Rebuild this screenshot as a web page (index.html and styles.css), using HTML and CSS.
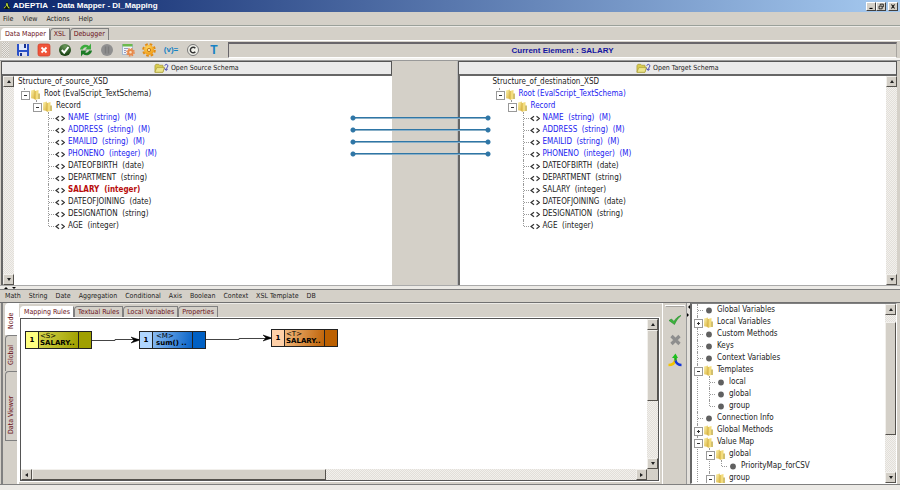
FILE: index.html
```html
<!DOCTYPE html>
<html lang="en">
<head>
    <meta charset="UTF-8">
    <meta name="viewport" content="width=device-width, initial-scale=1.0">
    <title>ADEPTIA - Data Mapper - DI_Mapping</title>
    <link rel="stylesheet" href="styles.css">
</head>
<body>
    <!-- shared icons -->
    <svg class="defs" aria-hidden="true">
        <defs>
            <linearGradient id="gold" x1="0" y1="0" x2="1" y2="1">
                <stop offset="0" stop-color="#fdf3b0"/><stop offset="1" stop-color="#d9b440"/>
            </linearGradient>
            <radialGradient id="sun" cx="40%" cy="30%" r="70%">
                <stop offset="0" stop-color="#ffd75e"/><stop offset="1" stop-color="#f09a14"/>
            </radialGradient>
            <radialGradient id="moss" cx="50%" cy="20%" r="80%">
                <stop offset="0" stop-color="#6c9a5c"/><stop offset="1" stop-color="#123a0c"/>
            </radialGradient>
        </defs>
        <symbol id="folder" viewBox="0 0 11 11">
            <path d="M1 1.500 5 .5v9.500l-4-.8z" fill="url(#gold)"/>
            <path d="M5 2 8.500 1v9L5 10.800z" fill="#f3dc7c"/>
            <path d="M4.700 2h.8v8.700h-.8z" fill="#cfa93a"/>
            <path d="M8 4.500h2V10H8z" fill="#d2c070"/>
        </symbol>
        <symbol id="tag" viewBox="0 0 11 11">
            <path d="M5 3.200 2 5.500l3 2.300M7.500 3.200l3 2.300-3 2.300" fill="none" stroke="#333" stroke-width="1.200"/>
        </symbol>
        <symbol id="dot" viewBox="0 0 11 11">
            <circle cx="6" cy="5.500" r="2.900" fill="#606060"/>
        </symbol>
        <symbol id="open" viewBox="0 0 16 11">
            <path d="M1 2.500 2 1h3l1 1h3.500v2H11L9.500 9.500H1z" fill="#d9cc50" stroke="#a3952d" stroke-width=".7"/>
            <path d="m1 9.500 2-5h8l-1.500 5z" fill="#ece58c" stroke="#a3952d" stroke-width=".6"/>
            <path d="M11.500 2.500C12 .5 15 .7 14.700 3c-.2 1.500-2 2-2 4M11.200 5.500l1.500 2 2-1.500" fill="none" stroke="#3535a8"/>
        </symbol>
    </svg>

    <header class="titlebar">
        <svg class="logo" viewBox="0 0 9 9"><path d="M4 0h1l3 7 1 1H0l3-3z" fill="#0c1608"/><path d="M3.500 1.500 5 1l1 4 2 2H6L4 4 2 7H.5l3-3z" fill="#b8d63c"/></svg>
        <h1>ADEPTIA &nbsp;- Data Mapper - DI_Mapping</h1>
        <div class="window-btns">
            <button aria-label="Minimize"><svg viewBox="0 0 10 9"><path d="M3 7h4" stroke="#000" stroke-width="1.500"/></svg></button>
            <button aria-label="Restore"><svg viewBox="0 0 10 9"><path d="M4 3V1.500h4V5H7M2.500 4h4v3.500h-4z" fill="none" stroke="#000"/></svg></button>
            <button class="close" aria-label="Close"><svg viewBox="0 0 10 9"><path d="m3 2 4 5M7 2 3 7" stroke="#000" stroke-width="1.300"/></svg></button>
        </div>
    </header>

    <nav class="menu main-menu">
        <button>File</button>
        <button>View</button>
        <button>Actions</button>
        <button>Help</button>
    </nav>

    <div class="tabs">
        <button class="tab active">Data Mapper</button>
        <button class="tab">XSL</button>
        <button class="tab">Debugger</button>
    </div>

    <div class="toolbar">
        <span class="grip"></span>
        <button aria-label="Save"><svg viewBox="0 0 14 14"><path d="M1 1h12v12H2l-1-1z" fill="#2a50c8"/><path d="M3 1h8v6H3z" fill="#dfe9fa"/><path d="M8 1h2v4H8z" fill="#1a3390"/><path d="M3 9h8v4H3z" fill="#dde"/><path d="M4 10h2v3H4z" fill="#1a3390"/></svg></button>
        <button aria-label="Close mapping"><svg viewBox="0 0 14 14"><rect x="1" y="1" width="12" height="12" rx="2" fill="#f0553a" stroke="#d03a26" stroke-width=".7"/><path d="m4.500 4.500 5 5m0-5-5 5" stroke="#fff" stroke-width="1.800"/></svg></button>
        <button aria-label="Validate"><svg viewBox="0 0 14 14"><circle cx="7" cy="7" r="6" fill="url(#moss)"/><path d="m3.800 7 2.400 2.700L10.500 4" fill="none" stroke="#fff" stroke-width="2"/></svg></button>
        <button aria-label="Refresh"><svg viewBox="0 0 14 14"><path d="M1 6.500C1.500 2 7 .5 10 3l2-2.500V6.500H6L8 4.700C6.500 3.800 4.500 4.500 4 6.500z" fill="#3bab3c"/><path d="M13 7.500C12.500 12 7 13.500 4 11l-2 2.500V7.500h6L6 9.300c1.500.9 3.500.2 4-1.800z" fill="#1c7a25"/></svg></button>
        <button aria-label="Stop"><svg viewBox="0 0 14 14"><circle cx="7" cy="7" r="6" fill="#8f8f8f"/><path d="M5.500 3.500v7M8.500 3.500v7" stroke="#7c7c7c" stroke-width="1.500"/></svg></button>
        <button aria-label="Form settings"><svg viewBox="0 0 14 14"><path d="M1.500 1.500h10v10h-10z" fill="#eef3fa" stroke="#8aa6c8" stroke-width=".7"/><path d="M1.500 1h10v2.500h-10z" fill="#6cba4c"/><path d="M3 5.500h4M3 7.500h2M3 9.500h2" stroke="#99b"/><circle cx="9.500" cy="9.300" r="2.300" fill="#f7dfc0" stroke="#e8894a" stroke-width="2"/><circle cx="9.500" cy="9.300" r="3.700" fill="none" stroke="#e8894a" stroke-width="1.300" stroke-dasharray="1.600 1.300"/></svg></button>
        <button aria-label="Settings"><svg viewBox="0 0 14 14"><circle cx="7" cy="7" r="5.800" fill="none" stroke="#e28a10" stroke-width="2" stroke-dasharray="2.600 1.950"/><circle cx="7" cy="7" r="5" fill="url(#sun)"/><circle cx="7" cy="7" r="1.700" fill="#f7e0a0" stroke="#b8660a" stroke-width=".8"/></svg></button>
        <button class="glyph vars">(v)=</button>
        <button aria-label="Constant"><svg viewBox="0 0 14 14"><circle cx="7" cy="7" r="5.500" fill="#f1f1ea" stroke="#777"/><path d="M9.300 5.200a2.800 2.800 0 1 0 0 3.600" fill="none" stroke="#333" stroke-width="1.500"/></svg></button>
        <button class="glyph text-tool">T</button>
        <output class="current">Current Element : SALARY</output>
    </div>

    <main class="mapper">
        <section class="pane source">
            <button class="open-schema"><svg><use href="#open"/></svg>Open Source Schema</button>
            <div class="pane-body">
                <div class="vscroll"><button class="up" aria-label="Scroll up"></button><button class="down" aria-label="Scroll down"></button></div>
                <div class="tree-box">
                    <p class="tree-title">Structure_of_source_XSD</p>
                    <ul class="tree">
                        <li><span class="row open"><svg><use href="#folder"/></svg>Root (EvalScript_TextSchema)</span>
                            <ul>
                                <li><span class="row open"><svg><use href="#folder"/></svg>Record</span>
                                    <ul>
                                        <li><span class="row mapped"><svg><use href="#tag"/></svg>NAME &nbsp;(string) &nbsp;(M)</span></li>
                                        <li><span class="row mapped"><svg><use href="#tag"/></svg>ADDRESS &nbsp;(string) &nbsp;(M)</span></li>
                                        <li><span class="row mapped"><svg><use href="#tag"/></svg>EMAILID &nbsp;(string) &nbsp;(M)</span></li>
                                        <li><span class="row mapped"><svg><use href="#tag"/></svg>PHONENO &nbsp;(integer) &nbsp;(M)</span></li>
                                        <li><span class="row"><svg><use href="#tag"/></svg>DATEOFBIRTH &nbsp;(date)</span></li>
                                        <li><span class="row"><svg><use href="#tag"/></svg>DEPARTMENT &nbsp;(string)</span></li>
                                        <li><span class="row used"><svg><use href="#tag"/></svg>SALARY &nbsp;(integer)</span></li>
                                        <li><span class="row"><svg><use href="#tag"/></svg>DATEOFJOINING &nbsp;(date)</span></li>
                                        <li><span class="row"><svg><use href="#tag"/></svg>DESIGNATION &nbsp;(string)</span></li>
                                        <li><span class="row"><svg><use href="#tag"/></svg>AGE &nbsp;(integer)</span></li>
                                    </ul>
                                </li>
                            </ul>
                        </li>
                    </ul>
                </div>
            </div>
        </section>

        <div class="links">
            <ul>
                <li></li>
                <li></li>
                <li></li>
                <li></li>
            </ul>
        </div>

        <section class="pane target">
            <button class="open-schema"><svg><use href="#open"/></svg>Open Target Schema</button>
            <div class="pane-body">
                <div class="tree-box">
                    <p class="tree-title">Structure_of_destination_XSD</p>
                    <ul class="tree">
                        <li><span class="row open mapped"><svg><use href="#folder"/></svg>Root (EvalScript_TextSchema)</span>
                            <ul>
                                <li><span class="row open mapped"><svg><use href="#folder"/></svg>Record</span>
                                    <ul>
                                        <li><span class="row mapped"><svg><use href="#tag"/></svg>NAME &nbsp;(string) &nbsp;(M)</span></li>
                                        <li><span class="row mapped"><svg><use href="#tag"/></svg>ADDRESS &nbsp;(string) &nbsp;(M)</span></li>
                                        <li><span class="row mapped"><svg><use href="#tag"/></svg>EMAILID &nbsp;(string) &nbsp;(M)</span></li>
                                        <li><span class="row mapped"><svg><use href="#tag"/></svg>PHONENO &nbsp;(integer) &nbsp;(M)</span></li>
                                        <li><span class="row"><svg><use href="#tag"/></svg>DATEOFBIRTH &nbsp;(date)</span></li>
                                        <li><span class="row"><svg><use href="#tag"/></svg>DEPARTMENT &nbsp;(string)</span></li>
                                        <li><span class="row"><svg><use href="#tag"/></svg>SALARY &nbsp;(integer)</span></li>
                                        <li><span class="row"><svg><use href="#tag"/></svg>DATEOFJOINING &nbsp;(date)</span></li>
                                        <li><span class="row"><svg><use href="#tag"/></svg>DESIGNATION &nbsp;(string)</span></li>
                                        <li><span class="row"><svg><use href="#tag"/></svg>AGE &nbsp;(integer)</span></li>
                                    </ul>
                                </li>
                            </ul>
                        </li>
                    </ul>
                </div>
                <div class="vscroll"><button class="up" aria-label="Scroll up"></button><button class="down" aria-label="Scroll down"></button></div>
            </div>
        </section>
    </main>

    <div class="splitter"><i class="tri-up"></i><i class="tri-down"></i></div>

    <nav class="menu fn-menu">
        <button>Math</button>
        <button>String</button>
        <button>Date</button>
        <button>Aggregation</button>
        <button>Conditional</button>
        <button>Axis</button>
        <button>Boolean</button>
        <button>Context</button>
        <button>XSL Template</button>
        <button>DB</button>
    </nav>

    <div class="rules">
        <div class="side-tabs">
            <button class="active">Node</button>
            <button>Global</button>
            <button class="viewer">Data Viewer</button>
        </div>

        <div class="editor">
            <div class="tabs">
                <button class="tab active">Mapping Rules</button>
                <button class="tab">Textual Rules</button>
                <button class="tab">Local Variables</button>
                <button class="tab">Properties</button>
            </div>
            <div class="canvas-frame">
                <div class="canvas">
                    <svg class="wires" aria-hidden="true">
                        <path d="M71 21.500h23v-1h24M185 20.500h33v-1h32" fill="none" stroke="#444"/>
                        <path d="M110 18l9 3-9 3 3-3zM242 16l9 3-9 3 3-3z" fill="#000" stroke="#000" stroke-width=".5"/>
                    </svg>
                    <div class="node src"><b>1</b><span><small>&lt;S&gt;</small>SALARY..</span><i></i></div>
                    <div class="node method"><b>1</b><span><small>&lt;M&gt;</small>sum() ..</span><i></i></div>
                    <div class="node dst"><b>1</b><span><small>&lt;T&gt;</small>SALARY..</span><i></i></div>
                </div>
                <div class="vscroll"><button class="up" aria-label="Scroll up"></button><div class="thumb canvas-thumb"></div><button class="down" aria-label="Scroll down"></button></div>
                <div class="hscroll"><button class="left" aria-label="Scroll left"></button><div class="thumb"></div><button class="right" aria-label="Scroll right"></button></div>
            </div>
        </div>

        <div class="actions">
            <hr>
            <button aria-label="Apply"><svg viewBox="0 0 14 14"><path d="M1 7.500 3.500 6 6 8.500C8 5 10 3.500 13 2.500 10 5 8 8 6.500 11.500z" fill="#3cb53c" stroke="#238a2a" stroke-width=".6"/></svg></button>
            <button aria-label="Delete"><svg viewBox="0 0 14 14"><path d="m3.500 3 8 8m0-8-8 8" stroke="#8e8e8e" stroke-width="3.200"/></svg></button>
            <button aria-label="Branch"><svg viewBox="0 0 14 14"><path d="M7.500 4.500V9" stroke="#18a818" stroke-width="2.500"/><path d="m4 5 3.500-4.500L10 5z" fill="#1ec01e"/><path d="M7 7.500C6.500 10.500 4 12 .5 12" fill="none" stroke="#f3c400" stroke-width="2.500"/><path d="M7.500 7.500C8 10 10.500 12 13.500 12" fill="none" stroke="#1536d8" stroke-width="2.500"/></svg></button>
        </div>

        <div class="divider"><i class="tri-left"></i><i class="tri-right"></i></div>

        <div class="explorer">
            <ul class="tree">
                <li><span class="row"><svg><use href="#dot"/></svg>Global Variables</span></li>
                <li><span class="row shut"><svg><use href="#folder"/></svg>Local Variables</span></li>
                <li><span class="row"><svg><use href="#dot"/></svg>Custom Methods</span></li>
                <li><span class="row"><svg><use href="#dot"/></svg>Keys</span></li>
                <li><span class="row"><svg><use href="#dot"/></svg>Context Variables</span></li>
                <li><span class="row open"><svg><use href="#folder"/></svg>Templates</span>
                    <ul>
                        <li><span class="row"><svg><use href="#dot"/></svg>local</span></li>
                        <li><span class="row"><svg><use href="#dot"/></svg>global</span></li>
                        <li><span class="row"><svg><use href="#dot"/></svg>group</span></li>
                    </ul>
                </li>
                <li><span class="row"><svg><use href="#dot"/></svg>Connection Info</span></li>
                <li><span class="row shut"><svg><use href="#folder"/></svg>Global Methods</span></li>
                <li class="more"><span class="row open"><svg><use href="#folder"/></svg>Value Map</span>
                    <ul>
                        <li><span class="row open"><svg><use href="#folder"/></svg>global</span>
                            <ul>
                                <li><span class="row"><svg><use href="#dot"/></svg>PriorityMap_forCSV</span></li>
                            </ul>
                        </li>
                        <li><span class="row open"><svg><use href="#folder"/></svg>group</span></li>
                    </ul>
                </li>
            </ul>
            <div class="vscroll"><button class="up" aria-label="Scroll up"></button><div class="thumb explorer-thumb"></div><button class="down" aria-label="Scroll down"></button></div>
        </div>
    </div>

    <footer class="status"></footer>
</body>
</html>
```
FILE: styles.css
```css
*{margin:0;
padding:0;
box-sizing: border-box;}
body{
    display: flex;
    flex-direction: column;
    height: 100vh;
    overflow: hidden;
    background-color: #d4d0c8;
    color: #222;
    font-family: "DejaVu Sans Condensed", "DejaVu Sans", sans-serif;
    font-size: 7px;
    line-height: 12px;
}
button{border: none;background: none;color: inherit;font: inherit;white-space: nowrap;}
ul{list-style: none;}
svg{display: block;}
.defs{position: absolute;width: 0;height: 0;}

/* title bar */
.titlebar{
    display: flex;
    align-items: center;
    height: 12px;
    padding: 0 2px 0 3px;
    background: linear-gradient(to right, #0a246a, #a6caf0);
    color: #fff;
}
.titlebar h1{flex: 1;font-family: "Liberation Sans", sans-serif;font-size: 8px;line-height: 12px;}
.logo{width: 8px;height: 8px;margin-right: 2px;}
.window-btns{display: flex;}
.window-btns button{
    width: 10px;
    height: 9px;
    background-color: #d4d0c8;
    border: 1px solid;
    border-color: #fff #404040 #404040 #fff;
}
.window-btns svg{width: 8px;height: 7px;}
.window-btns .close{margin-left: 2px;}

/* menus */
.menu{display: flex;}
.main-menu{gap: 9px;height: 14px;padding: 0 3px;border-bottom: 1px solid #9aa09a;}
.fn-menu{gap: 8px;height: 14px;padding: 0 5px;border-top: 1px solid #808080;border-bottom: 1px solid #707070;}

/* tabs */
.tabs{display: flex;align-items: flex-end;height: 14px;padding-left: 1px;border-top: 1px solid #eceae6;}
.tab{
    height: 12px;
    padding: 0 3px;
    border: 1px solid #808080;
    border-bottom: none;
    border-top-left-radius: 4px;
    color: #6b1018;
    line-height: 11px;
}
.tab.active{background-color: #fff;border-color: #fff #808080 #fff #fff;}

/* toolbar */
.toolbar{
    display: flex;
    align-items: center;
    gap: 7px;
    height: 20px;
    padding: 0 3px 0 2px;
    border-top: 1px solid #fff;
    border-bottom: 2px solid #f4f3f0;
}
.toolbar button, .toolbar button svg{width: 14px;height: 14px;}
.grip{width: 7px;height: 15px;background: repeating-conic-gradient(#c0bdb6 0 25%, #ece9e4 0 50%) 0 0 / 2px 2px;}
.toolbar .glyph{color: #1682c4;font-family: "Liberation Sans", sans-serif;font-weight: bold;}
.toolbar .vars{width: 16px;font-size: 8px;}
.toolbar .text-tool{font-size: 12px;}
.current{
    flex: 1;
    height: 16px;
    border: 1px solid;
    border-top-width: 2px;
    border-color: #68656a #a8a5a0 #fff #68656a;
    color: #1414a0;
    font-family: "Liberation Sans", sans-serif;
    font-size: 8px;
    font-weight: bold;
    line-height: 13px;
    text-align: center;
}

/* schemas */
.mapper{
    flex: 224;
    min-height: 0;
    display: grid;
    grid-template-columns: 391fr 66px 440fr;
    border-top: 1px solid #999;
    padding: 0 3px 0 1px;
}
.pane{display: flex;flex-direction: column;min-width: 0;min-height: 0;}
.open-schema{
    display: flex;
    align-items: center;
    justify-content: center;
    gap: 2px;
    height: 15px;
    background-color: #eaeaea;
    border: 1px solid #555;
    border-bottom: 2px solid #666;
}
.open-schema svg{width: 15px;height: 11px;}
.pane-body{flex: 1;display: flex;min-height: 0;background-color: #fff;border-left: 2px solid #666;}
.tree-box{flex: 1;padding-left: 4px;font-size: 8px;}
.target .tree-box{padding-left: 33px;}
.tree-title{height: 12px;}

/* scroll bars */
.vscroll, .hscroll{
    display: flex;
    justify-content: space-between;
    background: repeating-conic-gradient(#e2dfd9 0 25%, #f2f0ed 0 50%) 0 0 / 2px 2px;
}
.vscroll{flex-direction: column;width: 11px;}
.hscroll{height: 11px;}
.vscroll button, .hscroll button, .thumb{
    display: flex;
    align-items: center;
    justify-content: center;
    width: 11px;
    height: 11px;
    background-color: #d4d0c8;
    border: 1px solid;
    border-color: #f2f0ec #55524d #55524d #f2f0ec;
}
.vscroll button::after, .hscroll button::after{content: "";border: 2px solid transparent;}
.up::after{border-top: none !important;border-bottom: 3px solid #222 !important;}
.down::after{border-bottom: none !important;border-top: 3px solid #222 !important;}
.left::after{border-left: none !important;border-right: 3px solid #222 !important;}
.right::after{border-right: none !important;border-left: 3px solid #222 !important;}

/* trees */
.tree{padding-left: 2px;}
.tree ul{padding-left: 12px;}
.tree li{position: relative;}
.tree li::before{
    content: "";
    position: absolute;
    top: 0;
    bottom: 0;
    left: 4px;
    border-left: 1px dotted #999;
}
.tree li:last-child::before{bottom: auto;height: 6px;}
.tree li.more::before{bottom: 0;height: auto;}
.row{
    position: relative;
    display: flex;
    align-items: center;
    height: 12px;
    padding-left: 10px;
    white-space: nowrap;
}
.row svg{width: 11px;height: 11px;margin-right: 3px;}
.row::before{content: "";position: absolute;left: 5px;top: 6px;width: 5px;border-top: 1px dotted #999;}
.open::after, .shut::after{
    content: "";
    position: absolute;
    left: 1px;
    top: 3px;
    width: 7px;
    height: 7px;
    border: 1px solid #999;
    background: linear-gradient(#333, #333) center / 3px 1px no-repeat #fff;
}
.shut::after{background: linear-gradient(#333, #333) center / 3px 1px no-repeat, linear-gradient(#333, #333) center / 1px 3px no-repeat #fff;}
.mapped{color: #2222f0;}
.used{color: #b80c0c;font-weight: bold;}

/* mapping links, drawn over both panes */
.links{position: relative;border-right: 1px solid #bbb;}
.links ul{position: absolute;top: 51px;left: -42px;right: -34px;z-index: 1;}
.links li{
    height: 12px;
    background:
        radial-gradient(circle at 3px 6px, #2f76a6 2px, transparent 3px),
        radial-gradient(circle at calc(100% - 3px) 6px, #2f76a6 2px, transparent 3px),
        linear-gradient(#2f76a6 50%, #8ab0c8 50%) 3px 5px / calc(100% - 6px) 2px no-repeat;
}

.splitter{display: flex;align-items: center;gap: 4px;height: 4px;padding-left: 4px;border-top: 1px solid #aaa;background-color: #eceae6;}
.splitter i, .divider i{border: 2px solid transparent;}
.tri-up{border-top: none !important;border-bottom-color: #000 !important;}
.tri-down{border-bottom: none !important;border-top-color: #000 !important;}
.tri-left{border-left: none !important;border-right-color: #000 !important;}
.tri-right{border-right: none !important;border-left-color: #000 !important;}

/* rules area */
.rules{flex: 181;display: flex;min-height: 0;padding: 0 3px 0 1px;}
.side-tabs{width: 17px;padding-left: 2px;border-left: 2px solid #808080;border-right: 1px solid #fff;}
/* turned by 180deg so the labels read upwards: right/bottom is drawn left/top */
.side-tabs button{
    display: block;
    width: 12px;
    height: 36px;
    padding-top: 6px;
    border: solid #808080;
    border-width: 0 1px 1px 0;
    border-bottom-right-radius: 4px;
    color: #6b1018;
    line-height: 11px;
    text-align: left;
    writing-mode: vertical-rl;
    transform: rotate(180deg);
}
.side-tabs .active{height: 32px;background-color: #fff;border-color: #fff;}
.side-tabs .viewer{height: 70px;border-top-width: 1px;}
.editor{flex: 1;display: flex;flex-direction: column;min-width: 0;border-left: 1px solid #fff;border-right: 1px solid #fff;}
.editor .tabs{height: 15px;}
.canvas-frame{
    flex: 1;
    display: grid;
    grid-template-columns: 1fr 11px;
    grid-template-rows: 1fr 11px;
    min-height: 0;
    margin: 0 3px 3px 1px;
    border: 1px solid #555;
    outline: 1px solid #fff;
    background-color: #d4d0c8;
}
.canvas{position: relative;overflow: hidden;background-color: #fff;}
.wires{position: absolute;left: 0;top: 0;width: 100%;height: 40px;}
.node{
    position: absolute;
    display: flex;
    width: 67px;
    height: 18px;
    border: 1px solid #222;
    color: #000;
    font-family: "DejaVu Sans", sans-serif;
    font-weight: bold;
    line-height: 8px;
}
.node b{width: 13px;border-right: 1px solid #222;line-height: 16px;text-align: center;}
.node span{flex: 1;padding-left: 1px;white-space: nowrap;}
.node small{display: block;height: 7px;font-size: 7px;font-weight: normal;}
.node i{width: 13px;border-left: 1px solid #222;}
.src{left: 4px;top: 12px;background: linear-gradient(100deg, #e2e260, #a0a000 80%);}
.src b{background-color: #ffff80;}
.src i{background-color: #a0a000;}
.method{left: 118px;top: 12px;background: linear-gradient(100deg, #b0d6ff, #0a64c8 80%);}
.method span{padding-left: 3px;}
.method b{background-color: #b0d6ff;}
.method i{background-color: #0060c4;}
.dst{left: 250px;top: 10px;background: linear-gradient(100deg, #ffd0a0, #c06408 80%);}
.dst b{background-color: #ffd0a8;}
.dst i{background-color: #bc6000;}
.canvas-thumb{height: 71px;margin-bottom: auto;}
.hscroll .thumb{width: 47%;margin-right: auto;}

.actions{display: flex;flex-direction: column;align-items: center;gap: 6px;width: 24px;padding-top: 2px;border-right: 1px solid #999;}
.actions hr{width: 20px;border: 1px solid;border-color: #fff #fff #a8a5a0;}
.actions svg{width: 14px;height: 14px;}
.divider{display: flex;flex-direction: column;gap: 4px;width: 3px;padding-top: 2px;background-color: #e4e1dc;}

.explorer{
    flex: 0 0 207px;
    display: flex;
    overflow: hidden;
    border: 1px solid #fff;
    border-top: 1px solid #808080;
    border-left: 2px solid #666;
    background-color: #fff;
    font-size: 8px;
}
.explorer .tree{flex: 1;padding-left: 1px;}
.explorer-thumb{height: 113px;margin: 7px 0 auto;}
.status{height: 6px;border-top: 1px solid #808080;background-color: #eceae6;}
```
